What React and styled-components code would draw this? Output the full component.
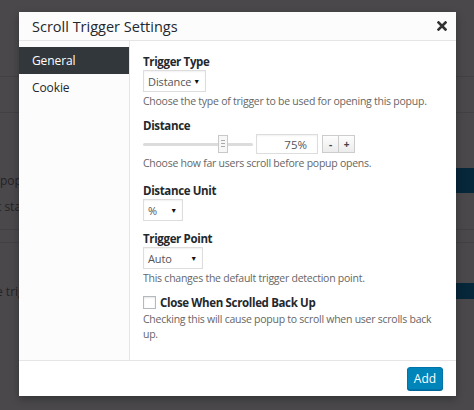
import styled, { createGlobalStyle } from "styled-components";

const GlobalStyle = createGlobalStyle`
  html, body {
    margin: 0;
    padding: 0;
  }
  body {
    background: #4a484b;
    font-family: "Open Sans", "Noto Sans", sans-serif;
  }
`;

const Page = styled.div`
  position: relative;
  width: 474px;
  height: 410px;
  overflow: hidden;
  display: flex;
  flex-direction: column;
  background: #4a484b;
`;

const BgRow = styled.div`
  height: ${(p) => p.h}px;
  flex-shrink: 0;
  box-sizing: border-box;
  border-bottom: 1px solid ${(p) => (p.line ? "#424044" : "transparent")};
  display: flex;
  flex-direction: column;
`;

const BgLine = styled.div`
  display: flex;
  justify-content: space-between;
  align-items: center;
  height: ${(p) => p.h}px;
  margin-top: ${(p) => p.top || 0}px;
`;

const BgText = styled.div`
  font-size: 12px;
  color: #242325;
  white-space: nowrap;
  margin-left: ${(p) => p.indent || 0}px;
`;

const BgButton = styled.div`
  width: 40px;
  height: ${(p) => p.h}px;
  margin-right: -22px;
  background: #062739;
  color: #4d6472;
  font-size: 12px;
  line-height: ${(p) => p.h}px;
  padding-left: 20px;
  box-sizing: border-box;
`;

const Modal = styled.div`
  position: absolute;
  left: 19px;
  top: 12px;
  width: 437px;
  height: 384px;
  background: #fff;
  display: flex;
  flex-direction: column;
  box-shadow: 0 3px 8px rgba(0, 0, 0, 0.3);
`;

const Header = styled.div`
  height: 29px;
  box-sizing: border-box;
  border-bottom: 1px solid #e5e5e5;
  display: flex;
  align-items: center;
  justify-content: space-between;
  padding: 0 9px 0 13px;
  background: #fcfcfc;
`;

const Title = styled.div`
  font-size: 14.5px;
  color: #23282d;
`;

const Close = styled.div`
  display: flex;
  width: 10px;
  height: 10px;
  color: #333;
`;

const Body = styled.div`
  flex: 1;
  display: flex;
  min-height: 0;
`;

const Sidebar = styled.div`
  width: 111px;
  box-sizing: border-box;
  border-right: 1px solid #e5e5e5;
  padding-top: 6px;
  background: #fcfcfd;
`;

const Tab = styled.div`
  height: 27px;
  display: flex;
  align-items: center;
  padding-left: 13px;
  font-size: 12px;
  letter-spacing: -0.1px;
  color: ${(p) => (p.active ? "#fff" : "#23282d")};
  background: ${(p) => (p.active ? "#32373c" : "transparent")};
`;

const Content = styled.div`
  flex: 1;
  padding: 12px 10px 11px 13px;
`;

const Field = styled.div`
  margin-bottom: ${(p) => p.gap || 9}px;
`;

const Label = styled.div`
  font-size: 11.5px;
  font-weight: 700;
  letter-spacing: -0.35px;
  line-height: 17px;
  color: #23282d;
`;

const Select = styled.div`
  display: flex;
  align-items: center;
  justify-content: space-between;
  width: ${(p) => p.w}px;
  height: 22px;
  box-sizing: border-box;
  border: 1px solid #ddd;
  box-shadow: inset 0 1px 2px rgba(0, 0, 0, 0.06);
  padding: 0 5px 0 4px;
  font-size: 11px;
  letter-spacing: -0.1px;
  color: #555;
  background: #fff;
`;

const Arrow = styled.span`
  font-size: 7px;
  color: #111;
`;

const Desc = styled.div`
  margin-top: 2px;
  font-size: 10.5px;
  letter-spacing: -0.25px;
  line-height: 15px;
  color: #666;
`;

const SliderRow = styled.div`
  display: flex;
  align-items: center;
  height: 20px;
`;

const Track = styled.div`
  position: relative;
  width: 110px;
  height: 3px;
  background: #dcdcdc;
  border-radius: 2px;
`;

const Handle = styled.div`
  position: absolute;
  top: -8px;
  width: 10px;
  height: 18px;
  box-sizing: border-box;
  border: 1px solid #c8c8c8;
  background: #f7f7f7;
  display: flex;
  flex-direction: column;
  justify-content: center;
  align-items: center;
  gap: 2px;
`;

const Grip = styled.span`
  width: 4px;
  height: 1px;
  background: #aaa;
`;

const NumberBox = styled.div`
  margin-left: 3px;
  width: 62px;
  height: 20px;
  box-sizing: border-box;
  border: 1px solid #ddd;
  box-shadow: inset 0 1px 2px rgba(0, 0, 0, 0.06);
  display: flex;
  align-items: center;
  justify-content: flex-end;
  padding-right: 10px;
  font-size: 11.5px;
  color: #555;
`;

const StepGroup = styled.div`
  display: flex;
  margin-left: 5px;
`;

const StepButton = styled.div`
  width: 17px;
  height: 18px;
  box-sizing: border-box;
  border: 1px solid #ccc;
  margin-left: -1px;
  background: linear-gradient(#fdfdfd, #ececec);
  display: flex;
  align-items: center;
  justify-content: center;
  font-size: 10px;
  font-weight: 700;
  color: #444;
`;

const CheckRow = styled.div`
  display: flex;
  align-items: center;
  gap: 4px;
  height: 16px;
`;

const Checkbox = styled.span`
  width: 13px;
  height: 13px;
  box-sizing: border-box;
  border: 1px solid #b4b9be;
  background: #fff;
  box-shadow: inset 0 1px 2px rgba(0, 0, 0, 0.1);
`;

const Footer = styled.div`
  height: 36px;
  box-sizing: border-box;
  border-top: 1px solid #e5e5e5;
  display: flex;
  align-items: center;
  justify-content: flex-end;
  padding-right: 13px;
`;

const PrimaryButton = styled.div`
  width: 36px;
  height: 23px;
  box-sizing: border-box;
  background: #0085ba;
  border: 1px solid #0073aa;
  border-radius: 3px;
  box-shadow: 0 1px 0 #006799;
  color: #fff;
  font-size: 12px;
  display: flex;
  align-items: center;
  justify-content: center;
`;

const DropDown = ({ value, w }) => (
  <Select w={w}>
    <span>{value}</span>
    <Arrow>▼</Arrow>
  </Select>
);

const App = () => {
  const distance = 75;
  return (
    <>
      <GlobalStyle />
      <Page>
        <BgRow h={77} line />
        <BgRow h={36} line />
        <BgRow h={117} line>
          <BgLine h={25} top={55}>
            <BgText>popup</BgText>
            <BgButton h={25}>Add</BgButton>
          </BgLine>
          <BgLine h={16} top={5}>
            <BgText indent={-3}>t status</BgText>
          </BgLine>
        </BgRow>
        <BgRow h={13} line />
        <BgRow h={167}>
          <BgLine h={16} top={40}>
            <BgText indent={-4}>e trigger</BgText>
            <BgButton h={16}>Add</BgButton>
          </BgLine>
        </BgRow>

        <Modal>
          <Header>
            <Title>Scroll Trigger Settings</Title>
            <Close>
              <svg width="10" height="10" viewBox="0 0 10 10">
                <path
                  d="M1.5 1.5 L8.5 8.5 M8.5 1.5 L1.5 8.5"
                  stroke="currentColor"
                  strokeWidth="2.6"
                  strokeLinecap="square"
                />
              </svg>
            </Close>
          </Header>
          <Body>
            <Sidebar>
              <Tab active>General</Tab>
              <Tab>Cookie</Tab>
            </Sidebar>
            <Content>
              <Field gap={8}>
                <Label>Trigger Type</Label>
                <DropDown value="Distance" w={63} />
                <Desc>Choose the type of trigger to be used for opening this popup.</Desc>
              </Field>
              <Field gap={11}>
                <Label>Distance</Label>
                <SliderRow>
                  <Track>
                    <Handle style={{ left: `${(distance / 100) * 100}px` }}>
                      <Grip />
                      <Grip />
                      <Grip />
                    </Handle>
                  </Track>
                  <NumberBox>{distance}%</NumberBox>
                  <StepGroup>
                    <StepButton>-</StepButton>
                    <StepButton>+</StepButton>
                  </StepGroup>
                </SliderRow>
                <Desc>Choose how far users scroll before popup opens.</Desc>
              </Field>
              <Field gap={9}>
                <Label>Distance Unit</Label>
                <DropDown value="%" w={40} />
              </Field>
              <Field gap={8}>
                <Label>Trigger Point</Label>
                <DropDown value="Auto" w={60} />
                <Desc>This changes the default trigger detection point.</Desc>
              </Field>
              <Field>
                <CheckRow>
                  <Checkbox />
                  <Label>Close When Scrolled Back Up</Label>
                </CheckRow>
                <Desc>
                  Checking this will cause popup to scroll when user scrolls back up.
                </Desc>
              </Field>
            </Content>
          </Body>
          <Footer>
            <PrimaryButton>Add</PrimaryButton>
          </Footer>
        </Modal>
      </Page>
    </>
  );
};

export default App;
